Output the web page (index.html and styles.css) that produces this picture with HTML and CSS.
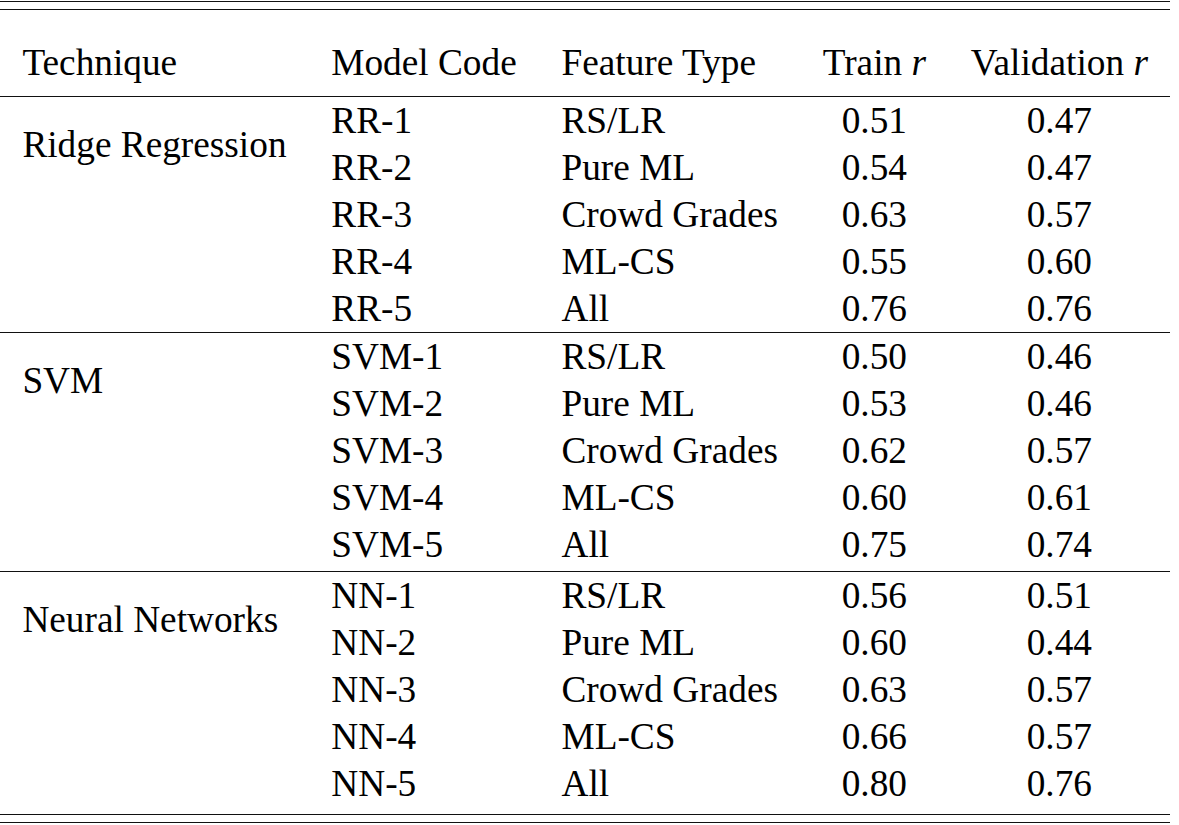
FILE: index.html
```html
<!DOCTYPE html>
<html lang="en">
<head>
<meta charset="utf-8">
<title>Model results</title>
<link rel="stylesheet" href="styles.css">
</head>
<body>
<div class="frame">
  <table class="results">
    <thead>
      <tr>
        <th class="left">Technique</th>
        <th class="left">Model Code</th>
        <th class="left">Feature Type</th>
        <th class="num">Train <i class="math">r</i></th>
        <th class="num">Validation <i class="math">r</i></th>
      </tr>
    </thead>
    <tbody class="group">
      <tr><td class="tech" rowspan="2">Ridge Regression</td><td>RR-1</td><td>RS/LR</td><td class="num">0.51</td><td class="num">0.47</td></tr>
      <tr><td>RR-2</td><td>Pure ML</td><td class="num">0.54</td><td class="num">0.47</td></tr>
      <tr><td></td><td>RR-3</td><td>Crowd Grades</td><td class="num">0.63</td><td class="num">0.57</td></tr>
      <tr><td></td><td>RR-4</td><td>ML-CS</td><td class="num">0.55</td><td class="num">0.60</td></tr>
      <tr><td></td><td>RR-5</td><td>All</td><td class="num">0.76</td><td class="num">0.76</td></tr>
    </tbody>
    <tbody class="group second">
      <tr><td class="tech" rowspan="2">SVM</td><td>SVM-1</td><td>RS/LR</td><td class="num">0.50</td><td class="num">0.46</td></tr>
      <tr><td>SVM-2</td><td>Pure ML</td><td class="num">0.53</td><td class="num">0.46</td></tr>
      <tr><td></td><td>SVM-3</td><td>Crowd Grades</td><td class="num">0.62</td><td class="num">0.57</td></tr>
      <tr><td></td><td>SVM-4</td><td>ML-CS</td><td class="num">0.60</td><td class="num">0.61</td></tr>
      <tr><td></td><td>SVM-5</td><td>All</td><td class="num">0.75</td><td class="num">0.74</td></tr>
    </tbody>
    <tbody class="group last">
      <tr><td class="tech" rowspan="2">Neural Networks</td><td>NN-1</td><td>RS/LR</td><td class="num">0.56</td><td class="num">0.51</td></tr>
      <tr><td>NN-2</td><td>Pure ML</td><td class="num">0.60</td><td class="num">0.44</td></tr>
      <tr><td></td><td>NN-3</td><td>Crowd Grades</td><td class="num">0.63</td><td class="num">0.57</td></tr>
      <tr><td></td><td>NN-4</td><td>ML-CS</td><td class="num">0.66</td><td class="num">0.57</td></tr>
      <tr><td></td><td>NN-5</td><td>All</td><td class="num">0.80</td><td class="num">0.76</td></tr>
    </tbody>
  </table>
</div>
</body>
</html>
```

FILE: styles.css
```css
html, body {
  margin: 0;
  padding: 0;
  background: #ffffff;
}

body {
  font-family: "Liberation Serif", "Times New Roman", serif;
  font-size: 37.3px;
  color: #000000;
  overflow: hidden;
}

.frame {
  width: max-content;
  margin-top: 1px;
  border-top: 1.5px solid #111111;
  border-bottom: 1.5px solid #111111;
  padding: 7px 0;
}

.results {
  border-collapse: collapse;
  border-top: 1.5px solid #111111;
  border-bottom: 1.5px solid #111111;
}

.results th,
.results td {
  padding: 0 0.6em;
  line-height: 47px;
  font-weight: normal;
  text-align: left;
  white-space: nowrap;
  vertical-align: middle;
}

.results thead th {
  padding-top: 29px;
  padding-bottom: 10px;
  border-bottom: 1.5px solid #111111;
}

.results .num {
  text-align: center;
}

.group {
  border-bottom: 1.5px solid #111111;
}

.group.second tr:last-child td {
  padding-bottom: 3px;
}

.group.last {
  border-bottom: none;
}

.group.last tr:last-child td {
  padding-bottom: 7px;
}

.math {
  font-style: italic;
}
```
